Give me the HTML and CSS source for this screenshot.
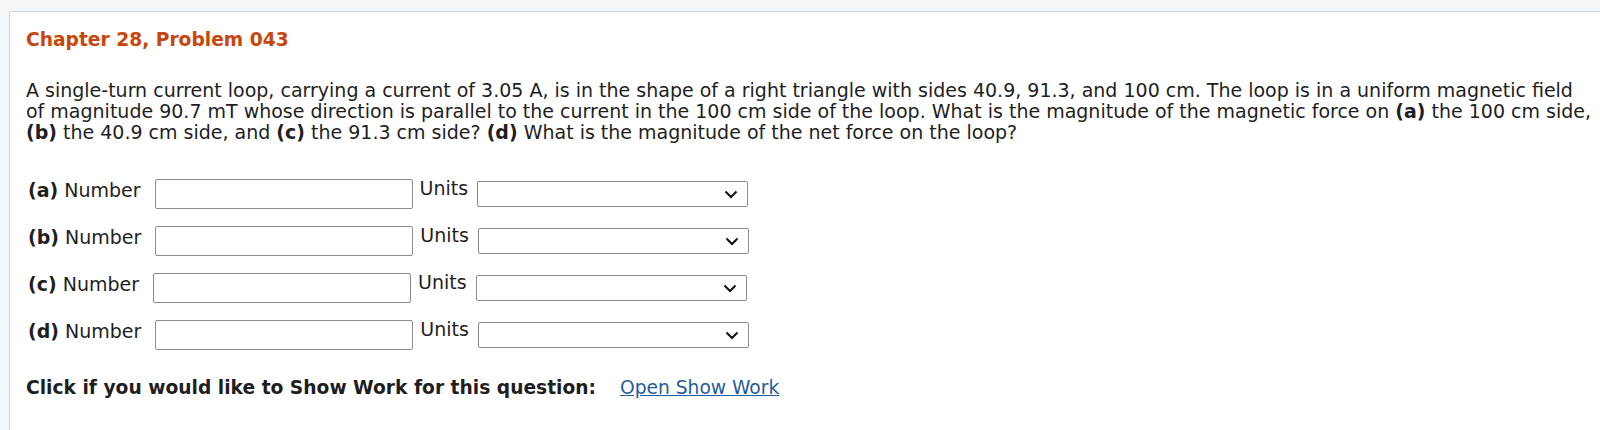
FILE: index.html
```html
<!DOCTYPE html>
<html lang="en">

<head>
    <meta charset="UTF-8">
    <meta name="viewport" content="width=device-width, initial-scale=1.0">
    <title>Chapter 28, Problem 043</title>
<link rel="stylesheet" href="styles.css">
</head>

<body>
    <div class="question-panel">
        <h2 class="question-title">Chapter 28, Problem 043</h2>

        <p class="question-text">A single-turn current loop, carrying a current of 3.05 A, is in the shape of a right triangle with sides 40.9, 91.3, and 100 cm. The loop is in a uniform magnetic field of magnitude 90.7 mT whose direction is parallel to the current in the 100 cm side of the loop. What is the magnitude of the magnetic force on <b>(a)</b> the 100 cm side, <b>(b)</b> the 40.9 cm side, and <b>(c)</b> the 91.3 cm side? <b>(d)</b> What is the magnitude of the net force on the loop?</p>

        <div class="answer-list">
          <div class="answer-row">
            <span class="answer-label"><b>(a)</b> Number</span>
            <input class="answer-number" type="text">
            <span class="answer-units">Units</span>
            <span class="select-wrap">
              <select class="answer-select"><option></option></select>
              <svg class="select-arrow" width="14" height="9" viewBox="0 0 14 9"><path d="M1.5 1.5 L7 7 L12.5 1.5" fill="none" stroke="#111" stroke-width="2"/></svg>
            </span>
          </div>
          <div class="answer-row">
            <span class="answer-label"><b>(b)</b> Number</span>
            <input class="answer-number" type="text">
            <span class="answer-units">Units</span>
            <span class="select-wrap">
              <select class="answer-select"><option></option></select>
              <svg class="select-arrow" width="14" height="9" viewBox="0 0 14 9"><path d="M1.5 1.5 L7 7 L12.5 1.5" fill="none" stroke="#111" stroke-width="2"/></svg>
            </span>
          </div>
          <div class="answer-row">
            <span class="answer-label"><b>(c)</b> Number</span>
            <input class="answer-number" type="text">
            <span class="answer-units">Units</span>
            <span class="select-wrap">
              <select class="answer-select"><option></option></select>
              <svg class="select-arrow" width="14" height="9" viewBox="0 0 14 9"><path d="M1.5 1.5 L7 7 L12.5 1.5" fill="none" stroke="#111" stroke-width="2"/></svg>
            </span>
          </div>
          <div class="answer-row">
            <span class="answer-label"><b>(d)</b> Number</span>
            <input class="answer-number" type="text">
            <span class="answer-units">Units</span>
            <span class="select-wrap">
              <select class="answer-select"><option></option></select>
              <svg class="select-arrow" width="14" height="9" viewBox="0 0 14 9"><path d="M1.5 1.5 L7 7 L12.5 1.5" fill="none" stroke="#111" stroke-width="2"/></svg>
            </span>
          </div>
        </div>

        <p class="show-work">
          <b>Click if you would like to Show Work for this question:</b>
          <a class="show-work-link" href="#">Open Show Work</a>
        </p>
    </div>
</body>

</html>
```

FILE: styles.css
```css
html,
body {
  margin: 0;
  background-color: #f3f6f9;
}

body {
  padding: 11px 0 0 9px;
  font-family: "DejaVu Sans", Verdana, sans-serif;
  font-size: 19px;
  color: #1e1e1e;
}

.question-panel {
  background-color: #fff;
  border-top: 1px solid #cfd6df;
  border-left: 1px solid #cfd6df;
  padding: 17px 7px 0 16px;
  min-height: 420px;
}

.question-title {
  margin: 0;
  font-size: 18.67px;
  line-height: 22px;
  font-weight: bold;
  color: #c8450b;
}

.question-text {
  margin: 29px 0 0 0;
  line-height: 21px;
}

.answer-list {
  margin-top: 34px;
  padding-left: 2px;
}

.answer-row {
  display: flex;
  align-items: flex-start;
  height: 32px;
  margin-bottom: 15px;
}

.answer-label {
  padding-top: 2px;
  line-height: 22px;
}

.answer-number {
  box-sizing: border-box;
  width: 258px;
  height: 30px;
  margin: 2px 0 0 14px;
  border: 1px solid #8a8a8a;
  border-radius: 2px;
  font-family: inherit;
  font-size: 16px;
}

.answer-units {
  padding-top: 1px;
  line-height: 20px;
  margin-left: 7px;
}

.select-wrap {
  position: relative;
  margin: 4px 0 0 9px;
}

.answer-select {
  display: block;
  box-sizing: border-box;
  width: 271px;
  height: 26px;
  border: 1px solid #8a8a8a;
  border-radius: 2px;
  background-color: #fff;
  font-family: inherit;
  font-size: 14px;
  appearance: none;
  -webkit-appearance: none;
}

.select-arrow {
  position: absolute;
  right: 10px;
  top: 9px;
  pointer-events: none;
}

.show-work {
  margin: 27px 0 0 0;
  font-size: 18.67px;
  line-height: 22px;
}

.show-work-link {
  margin-left: 18px;
  color: #1f5c99;
}
```
